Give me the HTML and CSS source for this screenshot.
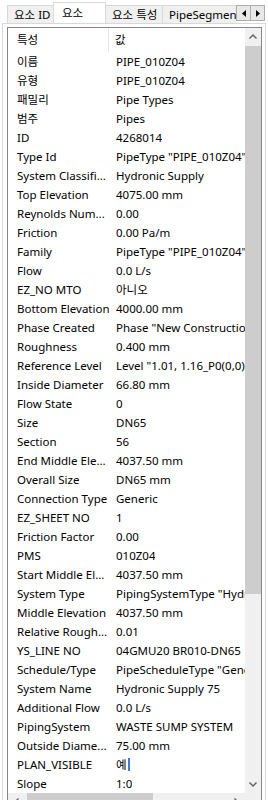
FILE: index.html
```html
<!DOCTYPE html>
<html>
<head>
    <title>요소 특성</title>
    <link rel="stylesheet" href="styles.css">
</head>
<body>
    <div class="tabbar">
        <div class="tabs">
            <div class="tab t1">요소 ID</div>
            <div class="tab t2 active">요소</div>
            <div class="tab t3">요소 특성</div>
            <div class="tab t4">PipeSegments</div>
        </div>
        <div class="tab-scroll">
            <div class="tab-btn">
                <svg width="4" height="7" viewBox="0 0 4 7"><path d="M4 0 L0 3.5 L4 7 Z" fill="#000"/></svg>
            </div>
            <div class="tab-btn">
                <svg width="4" height="7" viewBox="0 0 4 7"><path d="M0 0 L4 3.5 L0 7 Z" fill="#000"/></svg>
            </div>
        </div>
    </div>

    <div class="page">
        <div class="grid">
            <div class="grid-body">
                <div class="grid-main">
                    <div class="head">
                        <div class="hk">특성</div>
                        <div class="hv">값</div>
                    </div>
                    <div class="rows">
                        <div class="row"><div class="k">이름</div><div class="v">PIPE_010Z04</div></div>
                        <div class="row"><div class="k">유형</div><div class="v">PIPE_010Z04</div></div>
                        <div class="row"><div class="k">패밀리</div><div class="v">Pipe Types</div></div>
                        <div class="row"><div class="k">범주</div><div class="v">Pipes</div></div>
                        <div class="row"><div class="k">ID</div><div class="v">4268014</div></div>
                        <div class="row"><div class="k">Type Id</div><div class="v">PipeType "PIPE_010Z04"</div></div>
                        <div class="row"><div class="k">System Classifi...</div><div class="v">Hydronic Supply</div></div>
                        <div class="row"><div class="k">Top Elevation</div><div class="v">4075.00 mm</div></div>
                        <div class="row"><div class="k">Reynolds Num...</div><div class="v">0.00</div></div>
                        <div class="row"><div class="k">Friction</div><div class="v">0.00 Pa/m</div></div>
                        <div class="row"><div class="k">Family</div><div class="v">PipeType "PIPE_010Z04"</div></div>
                        <div class="row"><div class="k">Flow</div><div class="v">0.0 L/s</div></div>
                        <div class="row"><div class="k">EZ_NO MTO</div><div class="v">아니오</div></div>
                        <div class="row"><div class="k">Bottom Elevation</div><div class="v">4000.00 mm</div></div>
                        <div class="row"><div class="k">Phase Created</div><div class="v">Phase "New Construction"</div></div>
                        <div class="row"><div class="k">Roughness</div><div class="v">0.400 mm</div></div>
                        <div class="row"><div class="k">Reference Level</div><div class="v">Level "1.01, 1.16_P0(0,0)"</div></div>
                        <div class="row"><div class="k">Inside Diameter</div><div class="v">66.80 mm</div></div>
                        <div class="row"><div class="k">Flow State</div><div class="v">0</div></div>
                        <div class="row"><div class="k">Size</div><div class="v">DN65</div></div>
                        <div class="row"><div class="k">Section</div><div class="v">56</div></div>
                        <div class="row"><div class="k">End Middle Ele...</div><div class="v">4037.50 mm</div></div>
                        <div class="row"><div class="k">Overall Size</div><div class="v">DN65 mm</div></div>
                        <div class="row"><div class="k">Connection Type</div><div class="v">Generic</div></div>
                        <div class="row"><div class="k">EZ_SHEET NO</div><div class="v">1</div></div>
                        <div class="row"><div class="k">Friction Factor</div><div class="v">0.00</div></div>
                        <div class="row"><div class="k">PMS</div><div class="v">010Z04</div></div>
                        <div class="row"><div class="k">Start Middle El...</div><div class="v">4037.50 mm</div></div>
                        <div class="row"><div class="k">System Type</div><div class="v">PipingSystemType "Hydronic Supply"</div></div>
                        <div class="row"><div class="k">Middle Elevation</div><div class="v">4037.50 mm</div></div>
                        <div class="row"><div class="k">Relative Rough...</div><div class="v">0.01</div></div>
                        <div class="row"><div class="k">YS_LINE NO</div><div class="v">04GMU20 BR010-DN65</div></div>
                        <div class="row"><div class="k">Schedule/Type</div><div class="v">PipeScheduleType "Generic"</div></div>
                        <div class="row"><div class="k">System Name</div><div class="v">Hydronic Supply 75</div></div>
                        <div class="row"><div class="k">Additional Flow</div><div class="v">0.0 L/s</div></div>
                        <div class="row"><div class="k">PipingSystem</div><div class="v">WASTE SUMP SYSTEM</div></div>
                        <div class="row"><div class="k">Outside Diame...</div><div class="v">75.00 mm</div></div>
                        <div class="row"><div class="k">PLAN_VISIBLE</div><div class="v">예<span class="caret"></span></div></div>
                        <div class="row"><div class="k">Slope</div><div class="v">1:0</div></div>
                    </div>
                </div>
                <div class="vscroll">
                    <div class="sb-btn">
                        <svg width="8" height="5" viewBox="0 0 8 5"><path d="M0.5 4.5 L4 1 L7.5 4.5" fill="none" stroke="#606060" stroke-width="1.4"/></svg>
                    </div>
                    <div class="vtrack"><div class="vthumb"></div></div>
                    <div class="sb-btn">
                        <svg width="8" height="5" viewBox="0 0 8 5"><path d="M0.5 0.5 L4 4 L7.5 0.5" fill="none" stroke="#606060" stroke-width="1.4"/></svg>
                    </div>
                </div>
            </div>
            <div class="grid-foot">
                <div class="hscroll">
                    <div class="sb-btn h">
                        <svg width="5" height="8" viewBox="0 0 5 8"><path d="M4.5 0.5 L1 4 L4.5 7.5" fill="none" stroke="#606060" stroke-width="1.4"/></svg>
                    </div>
                    <div class="htrack"><div class="hthumb"></div></div>
                    <div class="sb-btn h">
                        <svg width="5" height="8" viewBox="0 0 5 8"><path d="M0.5 0.5 L4 4 L0.5 7.5" fill="none" stroke="#606060" stroke-width="1.4"/></svg>
                    </div>
                </div>
                <div class="corner"></div>
            </div>
        </div>
    </div>
</body>
</html>
```

FILE: styles.css
```css
body {
    margin: 0;
    width: 268px;
    height: 800px;
    overflow: hidden;
    background: #fff;
    color: #000;
    font-family: "Noto Sans", "Noto Sans CJK KR", sans-serif;
    font-size: 11.5px;
}

/* tab strip */
.tabbar {
    display: flex;
    height: 23px;
}
.tabs {
    display: flex;
    align-items: flex-end;
    width: 236px;
    padding-left: 7px;
    box-sizing: border-box;
    overflow: hidden;
}
.tab {
    flex-shrink: 0;
    height: 18px;
    line-height: 18px;
    box-sizing: border-box;
    border: 1px solid #d9d9d9;
    border-bottom: none;
    background: #f0f0f0;
    margin-left: -1px;
    padding-left: 6px;
    white-space: nowrap;
}
.tab.t1 { width: 47px; margin-left: 0; }
.tab.t2 { width: 53px; }
.tab.t3 { width: 58px; }
.tab.t4 { width: 80px; }
.tab.active {
    height: 22px;
    line-height: 20px;
    margin-bottom: -1px;
    background: #fff;
    padding-left: 8px;
    position: relative;
    z-index: 1;
}
.tab-scroll {
    display: flex;
    padding-top: 5px;
}
.tab-btn {
    width: 15px;
    height: 16px;
    box-sizing: border-box;
    border: 1px solid #adadad;
    background: #e8e8e8;
    display: flex;
    align-items: center;
    justify-content: center;
    margin-right: -1px;
}

/* page + grid */
.page {
    margin: 0 2px;
    padding: 3px 3px 0 4px;
    border: 1px solid #d9d9d9;
    border-bottom: none;
    height: 800px;
}
.grid {
    border: 1px solid #828790;
    background: #fff;
}
.grid-body {
    display: flex;
}
.grid-main {
    width: 237px;
    overflow: hidden;
}
.head {
    display: flex;
    height: 24px;
    line-height: 23px;
}
.hk {
    width: 101px;
    padding-left: 9px;
    box-sizing: border-box;
    border-right: 1px solid #e5e5e5;
}
.hv {
    padding-left: 6px;
}
.row {
    display: flex;
    height: 19px;
    line-height: 19px;
    white-space: nowrap;
}
.k {
    flex-shrink: 0;
    width: 101px;
    padding-left: 9px;
    box-sizing: border-box;
    overflow: hidden;
}
.v {
    padding-left: 7px;
    overflow: hidden;
}
.caret {
    display: inline-block;
    width: 2px;
    height: 13px;
    margin-left: 1px;
    vertical-align: -2px;
    background: #3b78d8;
}

/* scrollbars */
.vscroll {
    width: 16px;
    background: #f0f0f0;
    display: flex;
    flex-direction: column;
}
.sb-btn {
    height: 17px;
    display: flex;
    align-items: center;
    justify-content: center;
    flex-shrink: 0;
}
.sb-btn.h {
    width: 17px;
    height: auto;
}
.vtrack {
    flex-grow: 1;
}
.vthumb {
    margin-top: 1px;
    height: 548px;
    background: #cdcdcd;
}
.grid-foot {
    display: flex;
    height: 17px;
}
.hscroll {
    width: 237px;
    display: flex;
    background: #f0f0f0;
}
.htrack {
    flex-grow: 1;
}
.hthumb {
    margin-left: 2px;
    width: 126px;
    height: 100%;
    background: #cdcdcd;
}
.corner {
    flex-grow: 1;
    background: #f0f0f0;
}
```
